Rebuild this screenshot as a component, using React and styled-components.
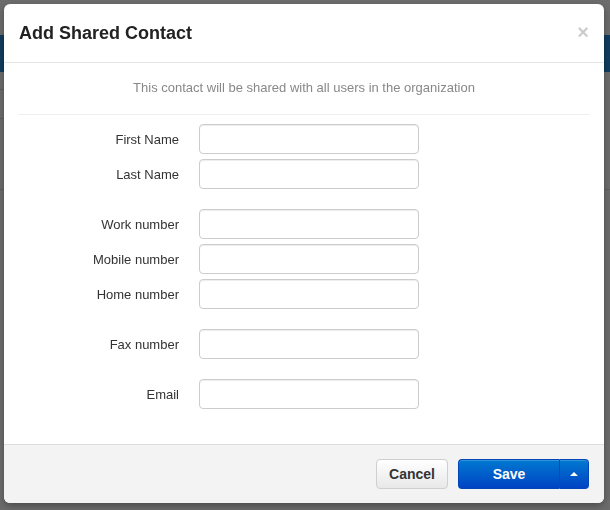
import React from 'react';
import styled, { createGlobalStyle } from 'styled-components';

const GlobalStyle = createGlobalStyle`
  html, body {
    margin: 0;
    padding: 0;
    height: 100%;
  }
  body {
    background: #6c6c6c;
    font-family: "Liberation Sans", Helvetica, Arial, sans-serif;
    color: #333;
    overflow: hidden;
  }
`;

// the dimmed page behind the dialog
const Backdrop = styled.div`
  display: flex;
  flex-direction: column;
  height: 510px;
  background: #6c6c6c;
`;
const TopGap = styled.div`
  height: 35px;
`;
const NavBar = styled.div`
  height: 37px;
  background: #113c60;
`;
const PageRow = styled.div`
  height: ${(p) => p.height}px;
  width: ${(p) => (p.short ? '200px' : '100%')};
  border-bottom: 1px solid #5f5f5f;
  box-sizing: border-box;
`;

const Overlay = styled.div`
  position: fixed;
  inset: 0;
  display: flex;
  justify-content: flex-start;
  align-items: flex-start;
  padding: 4px 0 0 4px;
`;

const Modal = styled.div`
  width: 600px;
  box-sizing: border-box;
  background: #fff;
  border-radius: 6px;
  box-shadow: 0 3px 7px rgba(0, 0, 0, 0.3);
  overflow: hidden;
  display: flex;
  flex-direction: column;
`;

const Header = styled.div`
  display: flex;
  align-items: center;
  justify-content: space-between;
  padding: 15px;
  border-bottom: 1px solid #e5e5e5;
`;
const Title = styled.h3`
  margin: 0;
  font-size: 18px;
  line-height: 28px;
  font-weight: bold;
  color: #222;
`;
const Close = styled.button`
  border: 0;
  background: none;
  padding: 0;
  font-family: inherit;
  font-size: 20px;
  font-weight: bold;
  line-height: 20px;
  color: #000;
  opacity: 0.2;
  cursor: pointer;
  margin-top: -3px;
`;

const Body = styled.div`
  height: 381px;
  box-sizing: border-box;
  padding: 15px 15px 0;
`;
const Intro = styled.p`
  margin: 0;
  text-align: center;
  font-size: 13px;
  line-height: 20px;
  color: #888;
`;
const Rule = styled.hr`
  margin: 16px 0 9px;
  border: 0;
  border-top: 1px solid #eee;
`;

const Form = styled.form`
  display: flex;
  flex-direction: column;
  gap: 20px;
`;
const Group = styled.div`
  display: flex;
  flex-direction: column;
  gap: 5px;
`;
const Field = styled.div`
  display: grid;
  grid-template-columns: 160px 220px;
  column-gap: 20px;
  align-items: center;
`;
const Label = styled.label`
  text-align: right;
  font-size: 13px;
  color: #333;
`;
const Input = styled.input`
  height: 30px;
  box-sizing: border-box;
  border: 1px solid #ccc;
  border-radius: 4px;
  box-shadow: inset 0 1px 1px rgba(0, 0, 0, 0.075);
  padding: 4px 6px;
  font-family: inherit;
  font-size: 13px;
  outline: none;
`;

const Footer = styled.div`
  display: flex;
  justify-content: flex-end;
  gap: 10px;
  padding: 14px 15px;
  background: #f3f3f3;
  border-top: 1px solid #ddd;
`;
const Button = styled.button`
  height: 30px;
  box-sizing: border-box;
  padding: 0 ${(p) => (p.wide ? '0' : '12px')};
  width: ${(p) => (p.wide ? '102px' : 'auto')};
  font-family: inherit;
  font-size: 14px;
  font-weight: bold;
  border-radius: 4px;
  cursor: pointer;
  color: ${(p) => (p.primary ? '#fff' : '#333')};
  border: 1px solid ${(p) => (p.primary ? '#0046b8' : '#cfcfcf')};
  background: ${(p) =>
    p.primary
      ? 'linear-gradient(to bottom, #0079d0, #0043c4)'
      : 'linear-gradient(to bottom, #ffffff, #e8e8e8)'};
  box-shadow: inset 0 1px 0 rgba(255, 255, 255, 0.2);
`;
const SplitGroup = styled.div`
  display: flex;
  & > ${Button}:first-child {
    border-top-right-radius: 0;
    border-bottom-right-radius: 0;
    border-right: 1px solid #0a4aa8;
  }
  & > ${Button}:last-child {
    border-top-left-radius: 0;
    border-bottom-left-radius: 0;
    border-left: 0;
  }
`;
const CaretButton = styled(Button)`
  width: 29px;
  padding: 0;
  display: flex;
  align-items: center;
  justify-content: center;
`;
const Caret = styled.span`
  width: 0;
  height: 0;
  border-left: 4px solid transparent;
  border-right: 4px solid transparent;
  border-bottom: 4px solid #fff;
`;

const groups = [
  ['First Name', 'Last Name'],
  ['Work number', 'Mobile number', 'Home number'],
  ['Fax number'],
  ['Email'],
];

const App = () => (
  <>
    <GlobalStyle />
    <Backdrop>
      <TopGap />
      <NavBar />
      <PageRow height={18} short />
      <PageRow height={29} short />
      <PageRow height={71} />
    </Backdrop>
    <Overlay>
      <Modal>
        <Header>
          <Title>Add Shared Contact</Title>
          <Close type="button">×</Close>
        </Header>
        <Body>
          <Intro>This contact will be shared with all users in the organization</Intro>
          <Rule />
          <Form>
            {groups.map((g) => (
              <Group key={g[0]}>
                {g.map((label) => (
                  <Field key={label}>
                    <Label>{label}</Label>
                    <Input type="text" />
                  </Field>
                ))}
              </Group>
            ))}
          </Form>
        </Body>
        <Footer>
          <Button type="button">Cancel</Button>
          <SplitGroup>
            <Button type="button" primary wide>
              Save
            </Button>
            <CaretButton type="button" primary>
              <Caret />
            </CaretButton>
          </SplitGroup>
        </Footer>
      </Modal>
    </Overlay>
  </>
);

export default App;
